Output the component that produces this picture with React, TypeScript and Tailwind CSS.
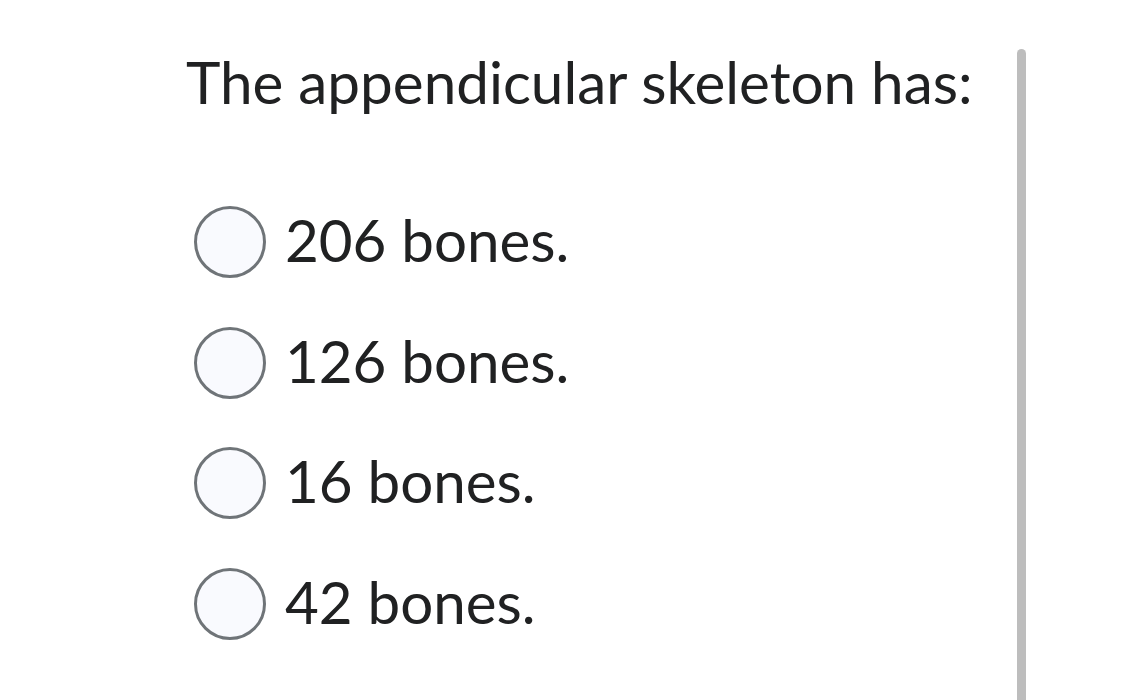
const options = ['206 bones.', '126 bones.', '16 bones.', '42 bones.']

export default function App() {
  return (
    <div className="h-[700px] w-[1125px] overflow-hidden bg-white flex" style={{ fontFamily: 'Lato, "Noto Sans", sans-serif' }}>
      <div className="flex-1 pl-[186px] pt-[45px]">
        <h1 className="text-[58.4px] leading-[72px] text-[#202122] font-normal">The appendicular skeleton has:</h1>
        <div className="mt-[89px] flex flex-col gap-[48.7px] pl-[8px]">
          {options.map((o) => (
            <label key={o} className="flex items-center gap-[19px] h-[72px]">
              <span className="w-[72px] h-[72px] rounded-full border-[3px] border-[#6f7478] bg-[#f9fafe] shrink-0" />
              <span className="text-[58.3px] leading-none text-[#202122] pb-[6px]">{o}</span>
            </label>
          ))}
        </div>
      </div>
      <div className="w-[9px] mt-[49px] mr-[99px] rounded-t-full bg-[#bdbdbd]" />
    </div>
  )
}
